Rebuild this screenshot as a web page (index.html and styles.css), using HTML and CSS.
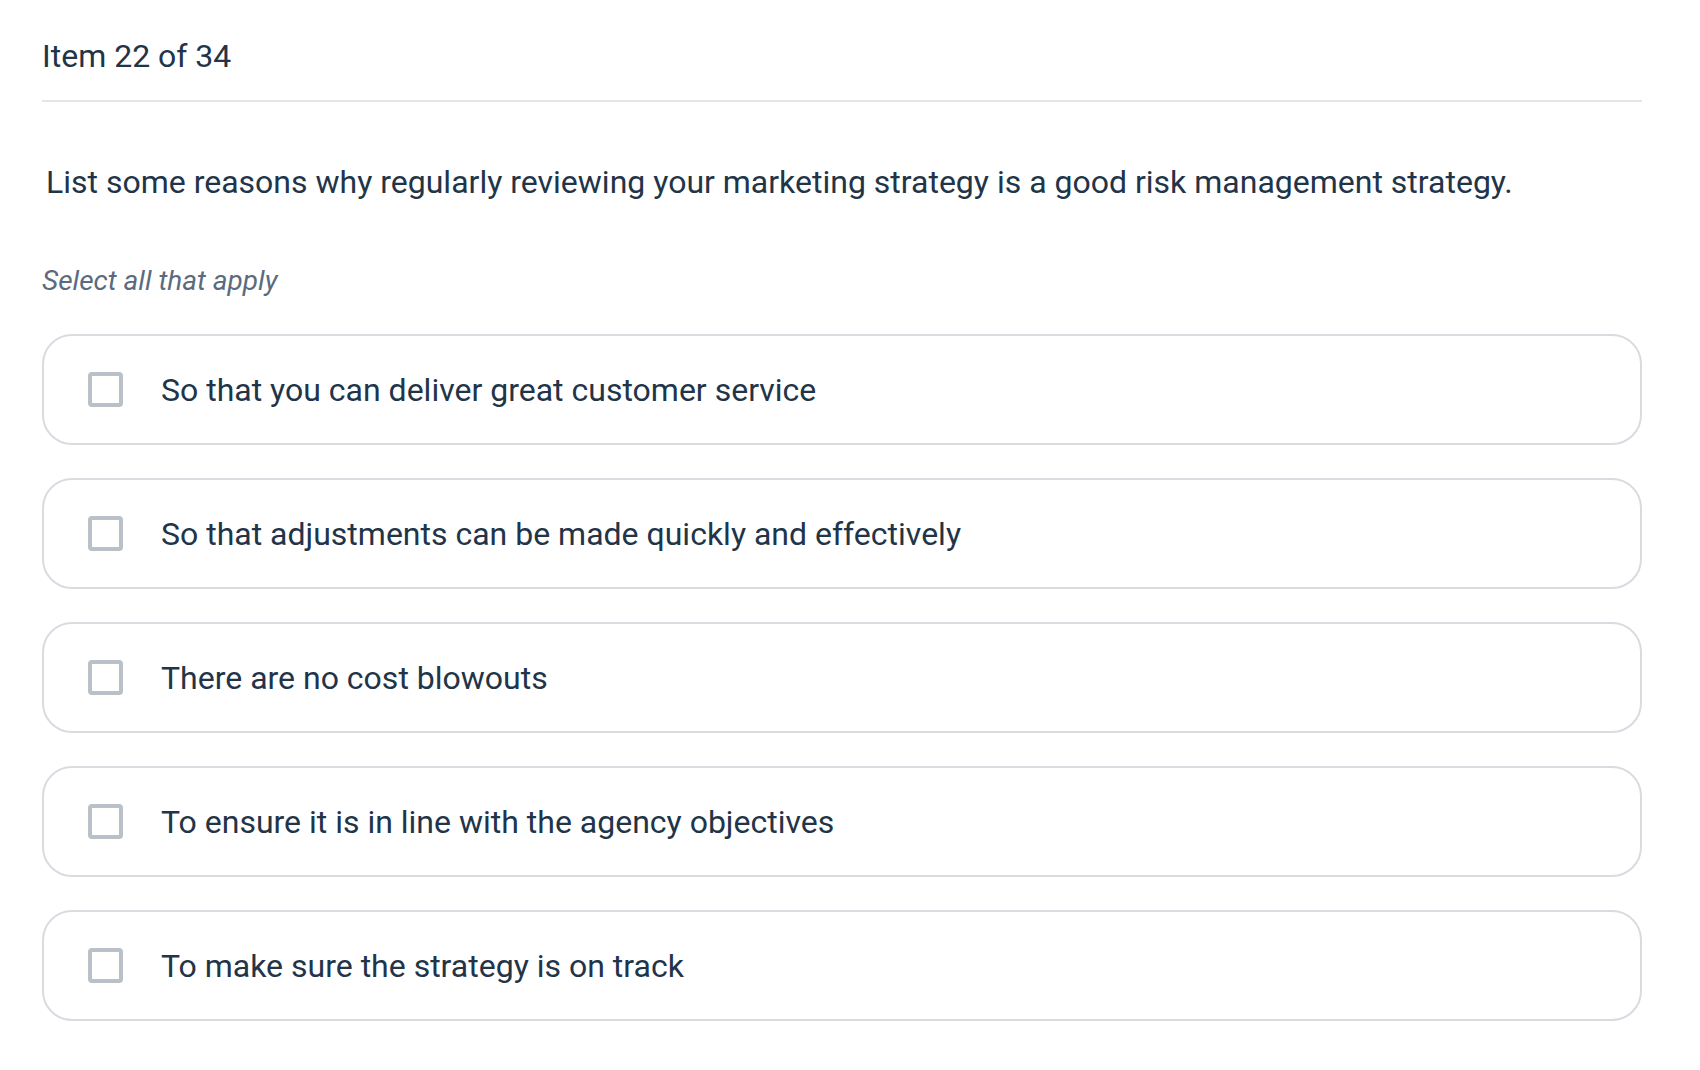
FILE: index.html
```html
<!DOCTYPE html>
<html lang="en">
<head>
<meta charset="utf-8">
<title>Item 22 of 34</title>
<link rel="stylesheet" href="styles.css">
</head>
<body>
<main class="page">
  <header class="item-header">Item 22 of 34</header>
  <p class="question">List some reasons why regularly reviewing your marketing strategy is a good risk management strategy.</p>
  <p class="hint">Select all that apply</p>
  <ul class="options">
    <li class="option"><span class="box"></span><span class="label">So that you can deliver great customer service</span></li>
    <li class="option"><span class="box"></span><span class="label">So that adjustments can be made quickly and effectively</span></li>
    <li class="option"><span class="box"></span><span class="label">There are no cost blowouts</span></li>
    <li class="option"><span class="box"></span><span class="label">To ensure it is in line with the agency objectives</span></li>
    <li class="option"><span class="box"></span><span class="label">To make sure the strategy is on track</span></li>
  </ul>
</main>
</body>
</html>
```

FILE: styles.css
```css
* { box-sizing: border-box; }
html, body { margin: 0; padding: 0; background: #ffffff; }
body {
  font-family: Roboto, "Liberation Sans", Arial, sans-serif;
  color: #223448;
}
.page {
  padding: 32px 58px 0 42px;
}
.item-header {
  font-size: 32px;
  line-height: 48px;
  padding-bottom: 20px;
  border-bottom: 2px solid #e3e5e8;
}
.question {
  margin: 56px 0 0 0;
  padding-left: 4px;
  font-size: 32px;
  line-height: 48px;
}
.hint {
  margin: 54px 0 0 0;
  font-size: 28px;
  line-height: 42px;
  font-style: italic;
  color: #5b6b7f;
}
.options {
  list-style: none;
  margin: 32px 0 0 0;
  padding: 0;
  display: flex;
  flex-direction: column;
  gap: 33px;
}
.option {
  height: 111px;
  border: 2px solid #d8dce1;
  border-radius: 30px;
  display: flex;
  align-items: center;
  padding-left: 44px;
  gap: 38px;
}
.box {
  flex: none;
  width: 35px;
  height: 35px;
  border: 4px solid #b9c0c8;
  border-radius: 4px;
  background: #fff;
}
.label {
  font-size: 32px;
  line-height: normal;
}
```
